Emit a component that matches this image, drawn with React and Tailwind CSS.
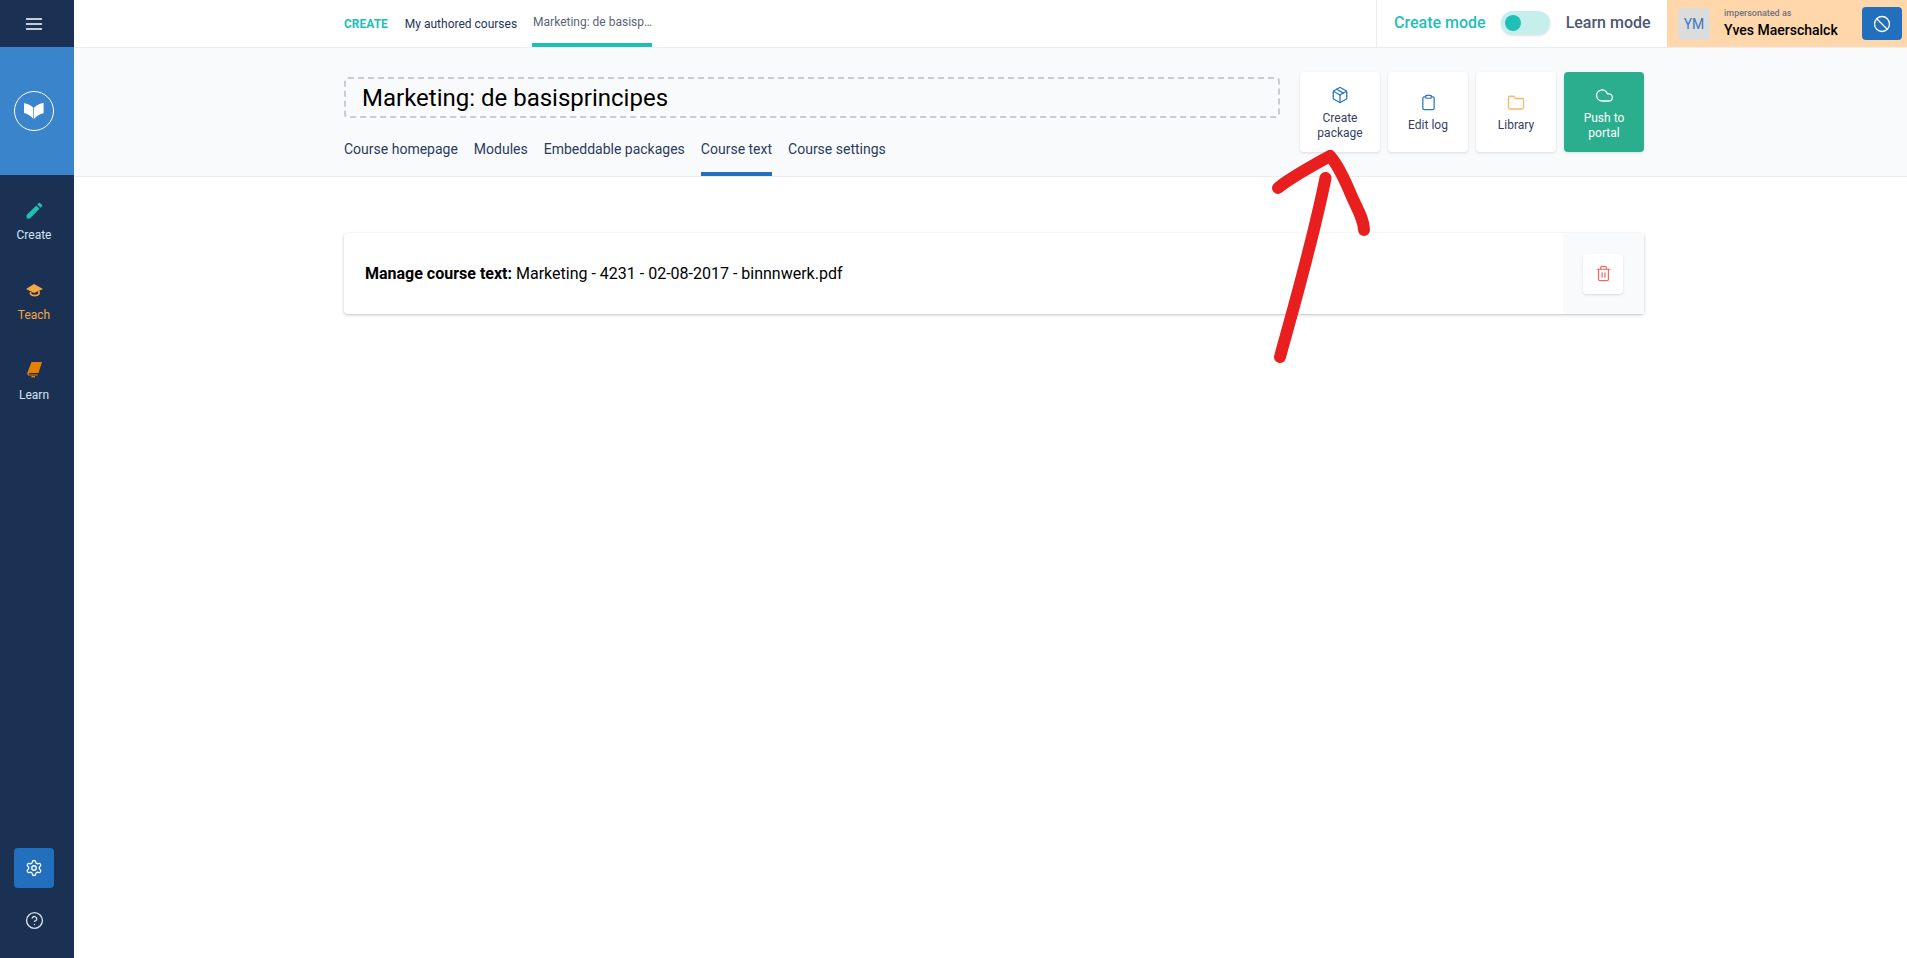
import React from "react";
import { Settings, CircleHelp, Package, Clipboard, Folder, Cloud, Ban, Trash2 } from "lucide-react";

const ActionButton = ({ icon, label, green }) => (
  <div
    className={`w-20 h-20 pt-[3px] rounded flex flex-col items-center justify-center text-xs leading-[15px] text-center shadow-[0_1px_3px_rgba(0,0,0,0.12)] ${
      green ? "bg-[#2aae8e] text-white" : "bg-white text-[#34425f]"
    }`}
  >
    <div className="h-[17px] flex items-center justify-center">{icon}</div>
    <div className="mt-[7px]">{label}</div>
  </div>
);

const SideItem = ({ icon, label, color }) => (
  <div className={`h-20 flex flex-col items-center justify-center text-xs ${color}`}>
    <div className="h-[18px] flex items-center justify-center">{icon}</div>
    <div className="mt-2">{label}</div>
  </div>
);

const MenuIcon = () => (
  <svg width="16" height="12" viewBox="0 0 16 12" stroke="#fff" strokeWidth="1.5">
    <path d="M0 1h16M0 6h16M0 11h16" />
  </svg>
);

const BookIcon = () => (
  <svg width="20" height="18" viewBox="0 0 20 18" fill="white">
    <path d="M0 1.3 C3.5 1.8 7 3.2 9.3 5.7 V16.9 C7 14 3.5 11.8 0 11 Z" />
    <path d="M19.6 0.8 C16 1.6 12.4 3.2 10 5.7 V16.9 C12.4 14 16 12 19.6 11.2 Z" />
  </svg>
);

const PencilIcon = () => (
  <svg width="21" height="21" viewBox="0 0 24 24" fill="#1fbfb8">
    <path d="M3 17.25V21h3.75L17.81 9.94l-3.75-3.75L3 17.25z" />
    <path d="M20.71 7.04a1 1 0 000-1.41l-2.34-2.34a1 1 0 00-1.41 0l-1.83 1.83 3.75 3.75 1.83-1.83z" />
  </svg>
);

const CapIcon = () => (
  <svg width="17" height="13" viewBox="0 0 17 13" fill="none">
    <path d="M0 5 L8 0 L17 5 L8 9 Z" fill="#f5a742" />
    <path d="M4.5 8 V10 C6.5 12.2 11 12.2 13 10 V7" stroke="#f5a742" strokeWidth="1.6" />
  </svg>
);

const LearnIcon = () => (
  <svg width="15" height="16" viewBox="0 0 15 16" fill="#e67e00">
    <path d="M4.5 0 H15 L11.5 11 H3 C1.8 11 1.4 12.6 2.8 12.6 H11 L10.5 13.6 H2.5 C0.3 13.6 -0.3 11.5 0.7 9.7 Z" />
    <path d="M4.5 14 H8 V16 L6.3 15 L4.5 16 Z" />
  </svg>
);

const Tab = ({ label, active }) => (
  <div className={`h-[47px] pb-1 flex items-center border-b-4 ${active ? "border-[#226fbd]" : "border-transparent"}`}>
    {label}
  </div>
);

const App = () => (
  <div className="relative flex h-[958px] font-['Roboto',sans-serif] bg-white overflow-hidden">
    <aside className="w-[74px] shrink-0 bg-[#1a3153] flex flex-col text-[#d5e3f5]">
      <div className="h-[47px] pr-[6px] flex items-center justify-center">
        <MenuIcon />
      </div>
      <div className="h-[128px] pr-[6px] bg-[#3a84cc] flex items-center justify-center">
        <div className="w-10 h-10 rounded-full border border-white flex items-center justify-center">
          <BookIcon />
        </div>
      </div>
      <div className="mt-[7px] pr-[6px] flex flex-col">
        <SideItem icon={<PencilIcon />} label="Create" />
        <SideItem icon={<CapIcon />} label="Teach" color="text-[#f5a742]" />
        <SideItem icon={<LearnIcon />} label="Learn" />
      </div>
      <div className="mt-auto pr-[6px] pb-3 flex flex-col items-center">
        <div className="w-10 h-10 rounded bg-[#226fbd] flex items-center justify-center">
          <Settings size={18} color="#fff" strokeWidth={1.75} />
        </div>
        <div className="h-[52px] flex items-center justify-center mt-[6px]">
          <CircleHelp size={19} color="#d8dde5" strokeWidth={1.75} />
        </div>
      </div>
    </aside>

    <main className="flex-1 min-w-0 flex flex-col">
      <header className="h-[48px] shrink-0 bg-white border-b border-[#e9ecf1] flex justify-between pl-[270px]">
        <nav className="flex text-xs text-[#1f3558] whitespace-nowrap">
          <div className="h-[47px] flex items-center font-bold text-[#1fbfb8] mr-[17px]">CREATE</div>
          <div className="h-[47px] flex items-center mr-[15px]">My authored courses</div>
          <div className="h-[47px] flex items-center pl-[1px] w-[120px] border-b-4 border-[#1fbfb8] text-[#5a6478]">
            <span className="truncate">Marketing: de basisprincipes</span>
          </div>
        </nav>
        <div className="flex">
          <div className="w-[291px] border-l border-[#e9ecf1] flex items-center pl-[17px] pb-[1px] text-base font-medium">
            <span className="text-[#1fbfb8]">Create mode</span>
            <div className="w-[49px] h-6 rounded-full bg-[#c6eeec] ml-[15px] mr-4 flex items-center pl-1 shadow-sm">
              <div className="w-4 h-4 rounded-full bg-[#1fbfb8]" />
            </div>
            <span className="text-[#4d5873]">Learn mode</span>
          </div>
          <div className="w-[240px] h-[47px] bg-[#ffd7ab] flex items-center pl-[11px] pr-[5px]">
            <div className="w-8 h-8 rounded bg-[#dcdcdc] text-[#3a78c2] text-sm flex items-center justify-center">YM</div>
            <div className="ml-[14px] flex-1">
              <div className="text-[9px] leading-[11px] font-medium text-[#71717e]">impersonated as</div>
              <div className="text-sm leading-[18px] font-medium text-black mt-[2px]">Yves Maerschalck</div>
            </div>
            <div className="w-10 h-[33px] rounded bg-[#226fbd] flex items-center justify-center">
              <Ban size={18} color="#fff" strokeWidth={1.75} />
            </div>
          </div>
        </div>
      </header>

      <section className="h-[129px] shrink-0 bg-[#f9fafc] border-b border-[#e9ecf1] pl-[270px] flex">
        <div className="w-[936px] shrink-0 pt-[29px]">
          <div className="h-[41px] border-2 border-dashed border-[#c8ccd3] rounded-sm flex items-center pl-4 text-2xl text-black">
            Marketing: de basisprincipes
          </div>
          <nav className="flex gap-4 mt-[11px] text-sm text-[#2b3c5c]">
            <Tab label="Course homepage" />
            <Tab label="Modules" />
            <Tab label="Embeddable packages" />
            <Tab label="Course text" active />
            <Tab label="Course settings" />
          </nav>
        </div>
        <div className="flex gap-2 pt-[24px] ml-[20px]">
          <ActionButton icon={<Package size={18} color="#2f75c4" strokeWidth={1.75} />} label={<>Create<br />package</>} />
          <ActionButton icon={<Clipboard size={17} color="#2f75c4" strokeWidth={1.75} />} label="Edit log" />
          <ActionButton icon={<Folder size={18} color="#f8b966" strokeWidth={1.75} />} label="Library" />
          <ActionButton icon={<Cloud size={19} color="#fff" strokeWidth={1.75} />} label={<>Push to<br />portal</>} green />
        </div>
      </section>

      <div className="pl-[270px] pt-[56px]">
        <div className="w-[1300px] h-[81px] flex rounded-sm bg-white shadow-[0_1px_3px_rgba(0,0,0,0.25)]">
          <div className="flex-1 flex items-center pl-[21px] text-base text-black">
            <b className="font-bold mr-1">Manage course text:</b> Marketing - 4231 - 02-08-2017 - binnnwerk.pdf
          </div>
          <div className="w-[81px] pr-[1px] bg-[#f9fafc] flex items-center justify-center">
            <div className="w-10 h-10 rounded bg-white shadow-sm flex items-center justify-center">
              <Trash2 size={17} color="#ec6a64" strokeWidth={1.75} />
            </div>
          </div>
        </div>
      </div>
    </main>

    {/* red arrow scribbled over the screenshot */}
    <svg className="absolute left-0 top-0 pointer-events-none" width="1907" height="958" fill="none" stroke="#e91e1e" strokeWidth="12" strokeLinecap="round" strokeLinejoin="round">
      <path d="M1280 357 C1290 320 1312 245 1325.5 178" />
      <path d="M1278 188 C1290 178 1305 170 1330 156 C1338 165 1345 180 1352 197 C1358 210 1364 220 1364 230" />
    </svg>
  </div>
);

export default App;
